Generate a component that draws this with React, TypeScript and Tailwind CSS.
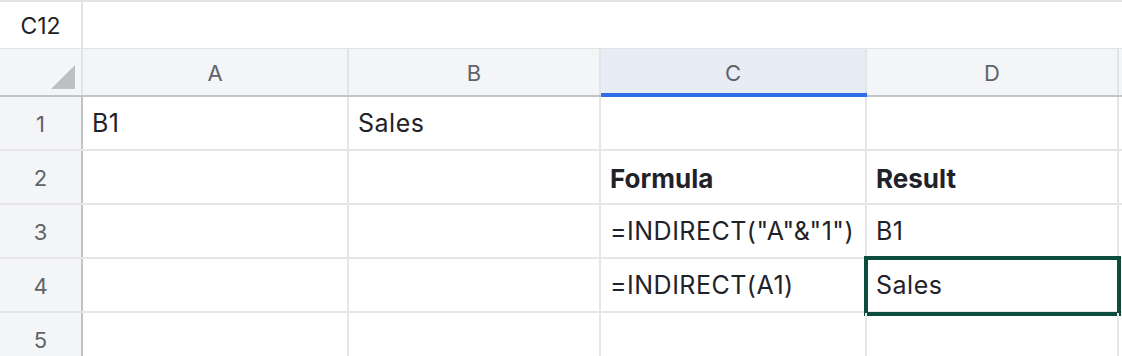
import React from "react";

const cols = [
  { key: "A", w: "w-[266px]" },
  { key: "B", w: "w-[252px]" },
  { key: "C", w: "w-[266px]" },
  { key: "D", w: "w-[252px]" },
];

const data: Record<number, (string | { t: string; b?: boolean })[]> = {
  1: ["B1", "Sales", "", ""],
  2: ["", "", { t: "Formula", b: true }, { t: "Result", b: true }],
  3: ["", "", '=INDIRECT("A"&"1")', "B1"],
  4: ["", "", "=INDIRECT(A1)", "Sales"],
  5: ["", "", "", ""],
};

export default function App() {
  return (
    <div
      className="w-[1122px] h-[356px] overflow-hidden bg-white text-[#1f2329]"
      style={{ fontFamily: "Inter, 'Liberation Sans', sans-serif" }}
    >
      {/* formula bar */}
      <div className="flex h-[49px] border-t-2 border-b border-[#e2e3e6]">
        <div className="w-[83px] shrink-0 border-r-2 border-[#e2e3e6] flex items-center justify-center pt-[2px] text-[23px] text-[#1f2329]">
          C12
        </div>
        <div className="flex-1" />
      </div>
      {/* header row */}
      <div className="flex h-[48px] bg-[#f4f5f7] border-b-2 border-[#c2c3c5]">
        <div className="w-[83px] shrink-0 border-r-2 border-[#e2e3e6] relative">
          <div
            className="absolute right-[6px] bottom-[6px] w-[24px] h-[24px] bg-[#bec0c3]"
            style={{ clipPath: "polygon(100% 0, 100% 100%, 0 100%)" }}
          />
        </div>
        {cols.map((c) => (
          <div
            key={c.key}
            className={`${c.w} shrink-0 relative flex items-center justify-center pt-[2px] text-[22px] text-[#5f6369] border-r-2 border-[#e2e3e6] ${
              c.key === "C" ? "bg-[#e8ecf4]" : ""
            }`}
          >
            {c.key}
            {c.key === "C" && (
              <div className="absolute left-0 right-[-2px] bottom-[-2px] h-[4px] bg-[#2f6ee8]" />
            )}
          </div>
        ))}
        <div className="flex-1" />
      </div>
      {/* rows */}
      {[1, 2, 3, 4, 5].map((r) => (
        <div key={r} className="flex h-[54px] border-b-2 border-[#e6e6e8]">
          <div className="w-[83px] shrink-0 bg-[#f4f5f7] border-r-2 border-[#c2c3c5] flex items-center justify-center pt-[2px] text-[22px] text-[#5f6369]">
            {r}
          </div>
          {cols.map((c, i) => {
            const v = data[r][i];
            const t = typeof v === "string" ? v : v.t;
            const b = typeof v === "string" ? false : !!v.b;
            const sel = r === 4 && c.key === "D";
            return (
              <div
                key={c.key}
                className={`${c.w} shrink-0 relative flex items-center pl-[9px] pt-[2px] whitespace-nowrap border-r-2 border-[#e6e6e8] ${
                  b ? "font-bold text-[26px]" : "text-[25px] tracking-[0.5px]"
                }`}
              >
                {t}
                {sel && (
                  <div className="absolute left-[-3px] top-[-3px] w-[257px] h-[60px] border-[4px] border-[#0d4d40]" />
                )}
              </div>
            );
          })}
          <div className="flex-1" />
        </div>
      ))}
    </div>
  );
}
